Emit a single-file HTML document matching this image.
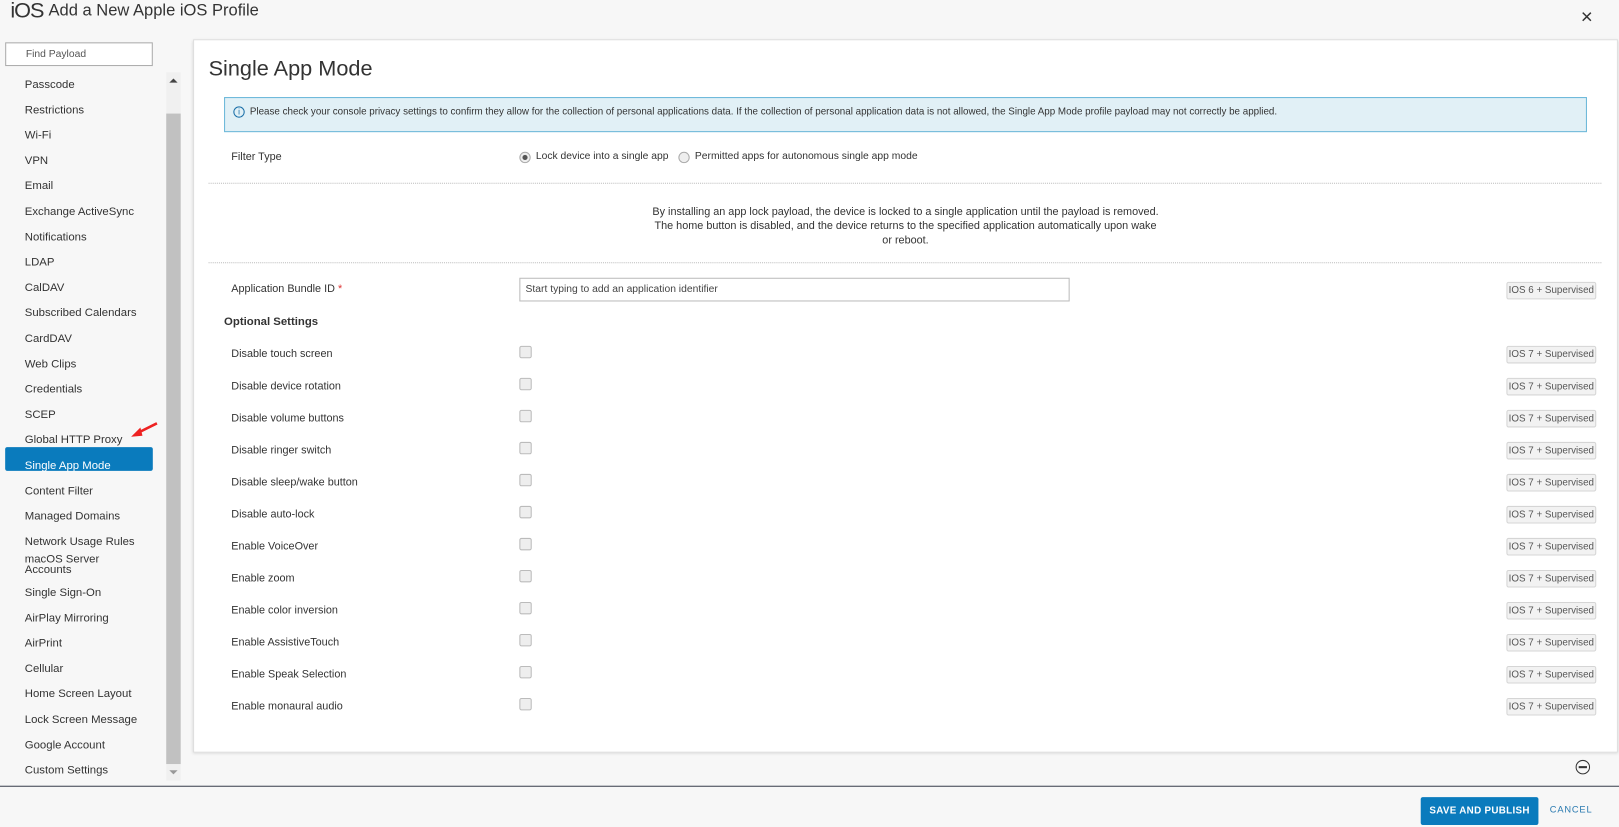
<!DOCTYPE html>
<html><head><style>
*{box-sizing:border-box;margin:0;padding:0}
body{width:1619px;height:827px;background:#f7f7f7;font-family:"Liberation Sans",sans-serif;font-size:11px;color:#333;overflow:hidden}
#w{position:relative;width:1568px;height:801px;transform:scale(1.0325);transform-origin:0 0}
.a{position:absolute}
.nav{left:24px;font-size:11px;color:#333;white-space:nowrap;line-height:14px}
.badge{position:absolute;left:1459px;width:87px;height:17px;border:1px solid #d5d5d5;background:#f2f2f2;border-radius:2px;font-size:9.5px;color:#555;text-align:center;line-height:15px;white-space:nowrap}
.cb{position:absolute;left:503px;width:12px;height:12px;border:1px solid #bbb;border-radius:2px;background:#eee}
.lbl{position:absolute;left:224px;font-size:10.5px;color:#333;line-height:14px}
.dot{position:absolute;left:202px;width:1349px;border-top:1px dotted #bbb}
</style></head><body><div id="w">
<div class="a" style="left:10px;top:-1px;font-size:21px;color:#333;letter-spacing:-1px">iOS</div>
<div class="a" style="left:47px;top:2px;font-size:16px;color:#333">Add a New Apple iOS Profile</div>
<div class="a" style="left:1531px;top:6px;font-size:20px;color:#333">×</div>
<div class="a" style="left:5px;top:41px;width:143px;height:23px;border:1px solid #aaa;background:#fff;font-size:10px;color:#555;padding:5px 0 0 19px">Find Payload</div>
<div class="a" style="left:161px;top:70px;width:14px;height:686px;background:#f0f0f0"></div>
<div class="a" style="left:161px;top:110px;width:14px;height:630px;background:#c1c1c1"></div>
<div class="a" style="left:164px;top:76px;width:0;height:0;border:4px solid transparent;border-bottom:4px solid #444;border-top:0"></div>
<div class="a" style="left:164px;top:746px;width:0;height:0;border:4px solid transparent;border-top:4px solid #999;border-bottom:0"></div>
<div class="a" style="left:5px;top:433px;width:143px;height:23px;background:#0a7bbd;border-radius:2px"></div>
<div id="navs"></div>
<svg class="a" style="left:124px;top:408px" width="30" height="18"><path d="M28 2 L8 12" stroke="#e22" stroke-width="2.5"/><path d="M3 15 L12 6 L14 14 Z" fill="#e22"/></svg>
<div class="a" style="left:187px;top:38px;width:1380px;height:691px;background:#fff;border:1px solid #ddd;box-shadow:0 1px 3px rgba(0,0,0,.15)"></div>
<div class="a" style="left:202px;top:55px;font-size:21px;color:#333">Single App Mode</div>
<div class="a" style="left:217px;top:94px;width:1320px;height:34px;background:#e1f0f6;border:1px solid #6ab7d9;font-size:9.5px;padding:8px 0 0 8px;color:#333;white-space:nowrap"><span style="display:inline-block;width:11px;height:11px;border:1px solid #1a6fa8;border-radius:50%;font-size:8px;text-align:center;line-height:9px;color:#1a6fa8;margin-right:5px">i</span>Please check your console privacy settings to confirm they allow for the collection of personal applications data. If the collection of personal application data is not allowed, the Single App Mode profile payload may not correctly be applied.</div>
<div class="lbl" style="top:145px">Filter Type</div>
<div class="a" style="left:503px;top:147px;width:11px;height:11px;border:1px solid #aaa;border-radius:50%;background:#eee"><div style="margin:2px;width:5px;height:5px;border-radius:50%;background:#555"></div></div>
<div class="a" style="left:519px;top:146px;font-size:10px">Lock device into a single app</div>
<div class="a" style="left:657px;top:147px;width:11px;height:11px;border:1px solid #aaa;border-radius:50%;background:#eee"></div>
<div class="a" style="left:673px;top:146px;font-size:10px">Permitted apps for autonomous single app mode</div>
<div class="dot" style="top:177px"></div>
<div class="a" style="left:577px;top:198px;width:600px;text-align:center;font-size:10.5px;line-height:14px;color:#333;white-space:nowrap">By installing an app lock payload, the device is locked to a single application until the payload is removed.<br>The home button is disabled, and the device returns to the specified application automatically upon wake<br>or reboot.</div>
<div class="dot" style="top:254px"></div>
<div class="lbl" style="top:273px">Application Bundle ID <span style="color:#d33">*</span></div>
<div class="a" style="left:503px;top:269px;width:533px;height:23px;border:1px solid #bbb;font-size:10px;padding:5px 0 0 5px;color:#444">Start typing to add an application identifier</div>
<div class="badge" style="top:273px">IOS 6 + Supervised</div>
<div class="a" style="left:217px;top:306px;font-size:11px;font-weight:bold;color:#333">Optional Settings</div>
<div id="rows"></div>
<div class="a" style="left:1526px;top:736px;width:14px;height:14px;border:1.5px solid #333;border-radius:50%"><div style="margin:5px 2px;height:1.5px;background:#333"></div></div>
<div class="a" style="left:0;top:761px;width:1619px;height:1px;background:#3c4350"></div>
<div class="a" style="left:1376px;top:772px;width:114px;height:27px;background:#0a7bbd;border-radius:2px;color:#fff;font-size:9.5px;font-weight:bold;text-align:center;line-height:27px;letter-spacing:.3px">SAVE AND PUBLISH</div>
<div class="a" style="left:1501px;top:779px;font-size:9px;color:#2a7ab0;letter-spacing:.8px">CANCEL</div>
</div>
<script>
var n=["Passcode","Restrictions","Wi-Fi","VPN","Email","Exchange ActiveSync","Notifications","LDAP","CalDAV","Subscribed Calendars","CardDAV","Web Clips","Credentials","SCEP","Global HTTP Proxy","Single App Mode","Content Filter","Managed Domains","Network Usage Rules","macOS Server Accounts","Single Sign-On","AirPlay Mirroring","AirPrint","Cellular","Home Screen Layout","Lock Screen Message","Google Account","Custom Settings"];
var h="";n.forEach(function(t,i){var y=75+i*24.6;
if(t=="macOS Server Accounts"){h+='<div class="a nav" style="top:'+(y-5)+'px;line-height:10px">macOS Server<br>Accounts</div>';}
else h+='<div class="a nav" style="top:'+y+'px;'+(i==15?'color:#fff':'')+'">'+t+'</div>';});
document.getElementById("navs").innerHTML=h;
var r=["Disable touch screen","Disable device rotation","Disable volume buttons","Disable ringer switch","Disable sleep/wake button","Disable auto-lock","Enable VoiceOver","Enable zoom","Enable color inversion","Enable AssistiveTouch","Enable Speak Selection","Enable monaural audio"];
h="";r.forEach(function(t,i){var y=336+i*31;h+='<div class="lbl" style="top:'+y+'px">'+t+'</div><div class="cb" style="top:'+(y-1)+'px"></div><div class="badge" style="top:'+(y-1)+'px">IOS 7 + Supervised</div>';});
document.getElementById("rows").innerHTML=h;
</script>
</body></html>
